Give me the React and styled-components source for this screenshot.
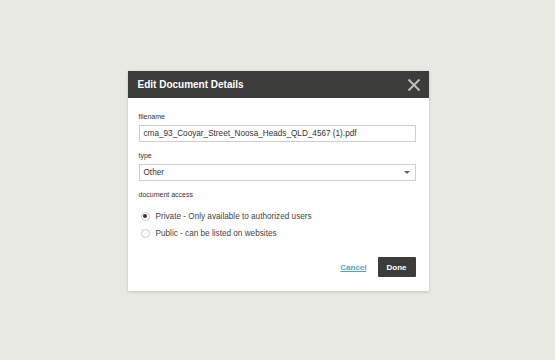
import React from "react";
import styled, { createGlobalStyle } from "styled-components";

const Global = createGlobalStyle`
  html, body { margin: 0; padding: 0; }
  body {
    background: #e9e9e4;
    font-family: "Liberation Sans", Arial, sans-serif;
    width: 555px;
    height: 360px;
    overflow: hidden;
  }
`;

const Page = styled.div`
  width: 555px;
  height: 360px;
  display: flex;
  justify-content: center;
  align-items: flex-start;
  padding-top: 71px;
  box-sizing: border-box;
`;

const Dialog = styled.div`
  width: 301px;
  margin-left: 1px;
  background: #fff;
  box-shadow: 0 1px 3px rgba(0, 0, 0, 0.18);
  display: flex;
  flex-direction: column;
`;

const Header = styled.div`
  height: 27px;
  background: #3c3c3b;
  display: flex;
  align-items: center;
  justify-content: space-between;
  padding: 0 8px 0 10px;
`;

const Title = styled.h1`
  margin: 0;
  font-size: 10px;
  font-weight: bold;
  color: #fff;
`;

const Close = styled.button`
  border: 0;
  background: none;
  padding: 0;
  width: 14px;
  height: 14px;
  display: flex;
  cursor: pointer;
`;

const Body = styled.div`
  padding: 15px 13px 14px 11px;
  display: flex;
  flex-direction: column;
`;

const Label = styled.div`
  font-size: 7px;
  color: #333;
  margin-bottom: ${(p) => p.$mb || 4}px;
`;

const Input = styled.div`
  height: 15px;
  border: 1px solid #cfcfcf;
  display: flex;
  align-items: center;
  padding: 0 4px;
  font-size: 8.2px;
  color: #333;
  margin-bottom: 10px;
  position: relative;
`;

const Caret = styled.span`
  position: absolute;
  right: 5px;
  top: 6px;
  width: 0;
  height: 0;
  border-left: 3px solid transparent;
  border-right: 3px solid transparent;
  border-top: 3px solid #666;
`;

const RadioRow = styled.label`
  display: flex;
  align-items: center;
  gap: 6px;
  font-size: 8.2px;
  color: #444;
  height: 12px;
  margin-left: 2px;
  margin-top: ${(p) => p.$mt || 0}px;
`;

const Circle = styled.span`
  width: 9px;
  height: 9px;
  border-radius: 50%;
  border: 1px solid #c9c9c9;
  box-sizing: border-box;
  display: flex;
  align-items: center;
  justify-content: center;
  background: #fff;
  &::after {
    content: "";
    width: 4px;
    height: 4px;
    border-radius: 50%;
    background: ${(p) => (p.$checked ? "#333" : "transparent")};
  }
`;

const Footer = styled.div`
  display: flex;
  justify-content: flex-end;
  align-items: center;
  gap: 11px;
  margin-top: 18px;
`;

const CancelLink = styled.a`
  font-size: 8px;
  font-weight: bold;
  color: #45a6dc;
  text-decoration: underline;
`;

const Done = styled.button`
  border: 0;
  background: #3c3c3b;
  color: #fff;
  font-family: inherit;
  font-weight: bold;
  font-size: 8px;
  width: 38px;
  height: 20px;
  border-radius: 1px;
  padding: 0;
`;

export default function App() {
  return (
    <>
      <Global />
      <Page>
        <Dialog>
          <Header>
            <Title>Edit Document Details</Title>
            <Close aria-label="close">
              <svg width="14" height="14" viewBox="0 0 14 14">
                <path d="M1.5 1.5 L12.5 12.5 M12.5 1.5 L1.5 12.5" stroke="#bdbdbd" strokeWidth="2" />
              </svg>
            </Close>
          </Header>
          <Body>
            <Label $mb={5}>filename</Label>
            <Input>cma_93_Cooyar_Street_Noosa_Heads_QLD_4567 (1).pdf</Input>
            <Label $mb={5}>type</Label>
            <Input>
              Other
              <Caret />
            </Input>
            <Label $mb={12}>document access</Label>
            <RadioRow>
              <Circle $checked />
              Private - Only available to authorized users
            </RadioRow>
            <RadioRow $mt={5}>
              <Circle />
              Public - can be listed on websites
            </RadioRow>
            <Footer>
              <CancelLink href="#">Cancel</CancelLink>
              <Done>Done</Done>
            </Footer>
          </Body>
        </Dialog>
      </Page>
    </>
  );
}
